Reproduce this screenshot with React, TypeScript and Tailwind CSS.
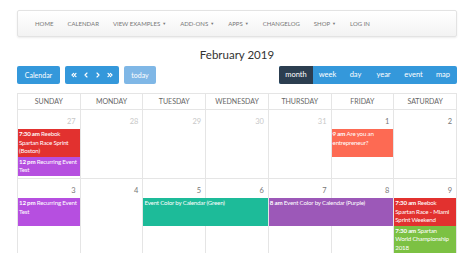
import React from 'react';
import { ChevronLeft, ChevronRight, ChevronsLeft, ChevronsRight } from 'lucide-react';

type Ev = {
  col: number;
  span?: number;
  row: number;
  time?: string;
  title: string;
  color: string;
};

const navItems = [
  { name: 'Home' },
  { name: 'Calendar' },
  { name: 'View Examples', caret: true },
  { name: 'Add-ons', caret: true },
  { name: 'Apps', caret: true },
  { name: 'Changelog' },
  { name: 'Shop', caret: true },
  { name: 'Log in' },
];

const days = ['Sunday', 'Monday', 'Tuesday', 'Wednesday', 'Thursday', 'Friday', 'Saturday'];

const weeks: { nums: { n: number; other?: boolean }[]; events: Ev[]; height: string }[] = [
  {
    nums: [
      { n: 27, other: true },
      { n: 28, other: true },
      { n: 29, other: true },
      { n: 30, other: true },
      { n: 31, other: true },
      { n: 1 },
      { n: 2 },
    ],
    height: 'h-[69px]',
    events: [
      { col: 1, row: 2, time: '7:30 am', title: 'Reebok Spartan Race Sprint (Boston)', color: 'bg-[#e2312f]' },
      { col: 6, row: 2, time: '9 am', title: 'Are you an entrepreneur?', color: 'bg-[#fd6a53]' },
      { col: 1, row: 3, time: '12 pm', title: 'Recurring Event Test', color: 'bg-[#b64fe0]' },
    ],
  },
  {
    nums: [{ n: 3 }, { n: 4 }, { n: 5 }, { n: 6 }, { n: 7 }, { n: 8 }, { n: 9 }],
    height: 'h-[80px]',
    events: [
      { col: 1, row: 2, time: '12 pm', title: 'Recurring Event Test', color: 'bg-[#b64fe0]' },
      { col: 3, span: 2, row: 2, title: 'Event Color by Calendar (Green)', color: 'bg-[#1dbb99]' },
      { col: 5, span: 2, row: 2, time: '8 am', title: 'Event Color by Calendar (Purple)', color: 'bg-[#9c58b8]' },
      { col: 7, row: 2, time: '7:30 am', title: 'Reebok Spartan Race - Miami Sprint Weekend', color: 'bg-[#e2312f]' },
      { col: 7, row: 3, time: '7:30 am', title: 'Spartan\nWorld Championship 2018', color: 'bg-[#7cc143]' },
    ],
  },
];

const colStart = ['', 'col-start-1', 'col-start-2', 'col-start-3', 'col-start-4', 'col-start-5', 'col-start-6', 'col-start-7'];
const rowStart = ['', 'row-start-1', 'row-start-2', 'row-start-3', 'row-start-4'];

const App: React.FC = () => {
  return (
    <div className="w-[474px] h-[253px] overflow-hidden bg-white font-['Lato','Liberation_Sans',sans-serif]">
      {/* Top navbar */}
      <div className="mt-[10px] mx-[17px] h-[27px] border border-[#e3e3e3] rounded-[2px] bg-gradient-to-b from-white to-[#f3f3f3] shadow-[0_1px_2px_rgba(0,0,0,0.08)] flex items-center pl-[17px] gap-[14px] text-[6px] uppercase text-[#777]">
        {navItems.map((item) => (
          <span key={item.name} className="flex items-center whitespace-nowrap">
            {item.name}
            {item.caret && <span className="ml-[2px] text-[4px]">▼</span>}
          </span>
        ))}
      </div>

      {/* Title */}
      <div className="mt-[9px] h-[17px] text-center text-[11.5px] leading-[17px] text-[#333]">February 2019</div>

      {/* Toolbar */}
      <div className="mt-[3px] mx-[17px] flex items-center h-[18px] text-[7px] text-white">
        <div className="h-full w-[43px] flex items-center justify-center bg-[#3498db] rounded-[2px]">Calendar</div>
        <div className="ml-[5px] h-full w-[54px] flex items-center justify-center bg-[#3498db] rounded-[2px] gap-[4px]">
          <ChevronsLeft size={8} strokeWidth={3.5} />
          <ChevronLeft size={8} strokeWidth={3.5} />
          <ChevronRight size={8} strokeWidth={3.5} />
          <ChevronsRight size={8} strokeWidth={3.5} />
        </div>
        <div className="ml-[5px] h-full w-[32px] flex items-center justify-center bg-[#7fb7e6] rounded-[2px]">today</div>
        <div className="ml-auto h-full flex items-stretch rounded-[2px] overflow-hidden bg-[#3498db] text-[7.5px]">
          <div className="w-[34px] flex items-center justify-center bg-[#2c3e50]">month</div>
          <div className="w-[29px] flex items-center justify-center">week</div>
          <div className="w-[27px] flex items-center justify-center">day</div>
          <div className="w-[29px] flex items-center justify-center">year</div>
          <div className="w-[31px] flex items-center justify-center">event</div>
          <div className="w-[28px] flex items-center justify-center">map</div>
        </div>
      </div>

      {/* Month grid */}
      <div className="mt-[9px] mx-[17px] border-l border-t border-[#e5e5e5]">
        <div className="grid grid-cols-7 h-[16px]">
          {days.map((d) => (
            <div key={d} className="border-r border-b border-[#e5e5e5] flex items-center justify-center text-[7px] uppercase text-[#666]">
              {d}
            </div>
          ))}
        </div>
        {weeks.map((w, wi) => (
          <div key={wi} className={`grid grid-cols-7 grid-rows-[19px_auto_auto_1fr] ${w.height} border-b border-[#e5e5e5]`}>
            {w.nums.map((d, i) => (
              <div key={`bg${i}`} className={`${colStart[i + 1]} row-start-1 row-end-5 border-r border-[#e5e5e5]`} />
            ))}
            {w.nums.map((d, i) => (
              <div
                key={`n${i}`}
                className={`${colStart[i + 1]} row-start-1 text-right pr-[5px] pt-[7px] text-[7.5px] leading-[9px] ${d.other ? 'text-[#c8c8c8]' : 'text-[#777]'}`}
              >
                {d.n}
              </div>
            ))}
            {w.events.map((e, i) => (
              <div
                key={`e${i}`}
                className={`${colStart[e.col]} ${e.span === 2 ? 'col-span-2' : ''} ${rowStart[e.row]} ${e.color} mr-[1px] pl-[1px] text-[6.2px] tracking-[-0.2px] leading-[8.5px] text-white py-[1px] whitespace-pre-line ${e.span ? 'truncate whitespace-nowrap' : ''}`}
              >
                {e.time && <span className="font-bold">{e.time} </span>}
                {e.title}
              </div>
            ))}
          </div>
        ))}
      </div>
    </div>
  );
};

export default App;
